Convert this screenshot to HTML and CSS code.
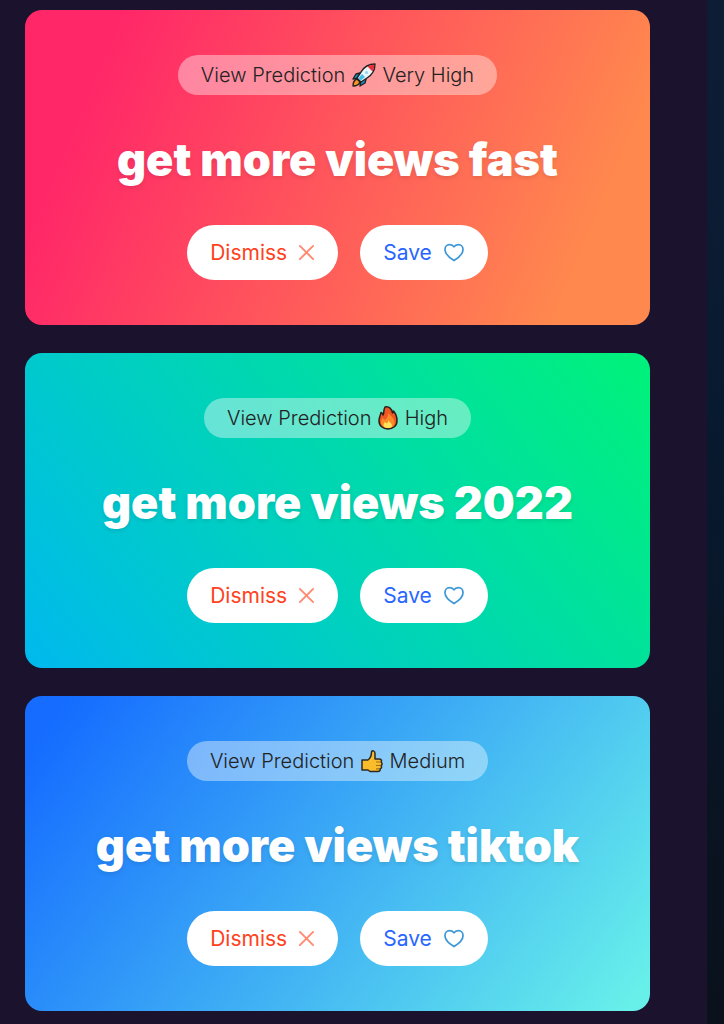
FILE: index.html
```html
<!DOCTYPE html>
<html lang="en">
<head>
<meta charset="UTF-8" />
<meta name="viewport" content="width=device-width, initial-scale=1" />
<title>Keyword ideas</title>
<link rel="stylesheet" href="styles.css">
</head>
<body>

<!-- shared icons -->
<svg class="sprite" aria-hidden="true">
  <symbol id="icon-close" viewBox="0 0 18 18">
    <path d="M2 2l14 14M16 2l-14 14" fill="none" stroke="#ff8a70" stroke-width="2" stroke-linecap="round"/>
  </symbol>
  <symbol id="icon-heart" viewBox="0 0 22 20">
    <path d="M11 18.500C7 16 1.500 11.500 1.500 7C1.500 3.800 3.600 1.800 6.200 1.800C8.500 1.800 10.200 2.600 11 4C11.800 2.600 13.500 1.800 15.800 1.800C18.400 1.800 20.500 3.800 20.500 7C20.500 11.500 15 16 11 18.500Z" fill="none" stroke="#3c97d8" stroke-width="1.800" stroke-linejoin="round"/>
  </symbol>
</svg>

<main class="ideas">
  <article class="card card-very-high">
    <p class="prediction">View Prediction
      <svg class="emoji" viewBox="0 0 24 24" role="img" aria-label="rocket">
        <path d="M8 10L4 11L1 16L7 15L9 17L8 23L13 20L14 16Z" fill="#1593c7" stroke="#222" stroke-width="1.400" stroke-linejoin="round"/>
        <path d="M5 16C2 17 1 20 1 23C4 23 7 22 8 19Z" fill="#f7941d" stroke="#222" stroke-width="1.400" stroke-linejoin="round"/>
        <path d="M23 1C17 1 12 4 9 9L5 15L9 19L15 15C20 12 23 7 23 1Z" fill="#e9f5fa" stroke="#222" stroke-width="1.400" stroke-linejoin="round"/>
        <path d="M22.300 1.700C19.500 1.700 17.500 2.300 15.500 3.500L20.500 8.500C21.700 6.500 22.300 4.500 22.300 1.700Z" fill="#e6303a"/>
        <path d="M6.500 15L9 17.500L13 14L10 11Z" fill="#45bce6"/>
        <circle cx="14.500" cy="9.500" r="1.500" fill="#8fd3ec"/>
      </svg>
      Very High</p>
    <h2>get more views fast</h2>
    <div class="actions">
      <button type="button" class="dismiss">Dismiss <svg><use href="#icon-close"/></svg></button>
      <button type="button" class="save">Save <svg><use href="#icon-heart"/></svg></button>
    </div>
  </article>

  <article class="card card-high">
    <p class="prediction">View Prediction
      <svg class="emoji emoji-fire" viewBox="0 0 20 24" role="img" aria-label="fire">
        <path d="M7 1C11 0 14 3 14.500 7C15.200 6.500 15.500 6 15.500 5C18 8 19 11 19 14.500C19 20 15 23 10 23C5 23 1 20 1 14.500C1 11 2.500 9.500 3 6.500C4.500 7 5 8 5 9C6.500 7 5 4.500 7 1Z" fill="#ef5724" stroke="#2b201b" stroke-width="1.500" stroke-linejoin="round"/>
        <path d="M10 7C13 10 16.500 12 16.500 17C16.500 20.500 13.500 22 10 22C6.500 22 3 20 3 16.500C3 14.500 4 13 4.500 12L7 14C9 12 10.500 10 10 7Z" fill="#fb8b27"/>
        <path d="M10 14C11 16 14 17 14 19.500C14 21.500 12 22 10 22C7.500 22 5.500 21 5.500 19C5.500 17.500 6.500 17 7 16L9 17.500C10 16.500 10.200 15.500 10 14Z" fill="#ffe45b"/>
      </svg>
      High</p>
    <h2>get more views 2022</h2>
    <div class="actions">
      <button type="button" class="dismiss">Dismiss <svg><use href="#icon-close"/></svg></button>
      <button type="button" class="save">Save <svg><use href="#icon-heart"/></svg></button>
    </div>
  </article>

  <article class="card card-medium">
    <p class="prediction">View Prediction
      <svg class="emoji emoji-thumb" viewBox="0 0 22 24" role="img" aria-label="thumbs up">
        <path d="M1 11H7C10 9 10.500 7 10.500 3C11 1 14 1.500 14 4.500V10H18.500C20.500 10 21 12 20 13C21.500 14 21.300 16 20 16.500C21 18 20.500 19.500 19 19.800C19.500 21.500 18.500 22.500 17 22.500H9L7 21H1Z" fill="#f9bd2c" stroke="#2d2a26" stroke-width="1.500" stroke-linejoin="round"/>
        <path d="M15 13H19.500M15 16.500H19.500M15 19.800H18.500" stroke="#a86c18" stroke-width="1.200" fill="none"/>
      </svg>
      Medium</p>
    <h2>get more views tiktok</h2>
    <div class="actions">
      <button type="button" class="dismiss">Dismiss <svg><use href="#icon-close"/></svg></button>
      <button type="button" class="save">Save <svg><use href="#icon-heart"/></svg></button>
    </div>
  </article>
</main>

</body>
</html>
```

FILE: styles.css
```css
* { box-sizing: border-box; }
body { margin: 0; padding-right: 17px; background: linear-gradient(#0e1d36, #081a30 40%, #0a111b); font-family: Inter, sans-serif; }
.sprite { display: none; }
.ideas { display: flex; flex-direction: column; gap: 28px; padding: 10px 57px 13px 25px; background: #1b122e; }

.card { display: flex; flex-direction: column; align-items: center; padding: 45px 20px; border-radius: 17px; text-align: center; }
.card-very-high { background: linear-gradient(113deg, #ff2768 13%, #ff884e 87%); }
.card-high { background: linear-gradient(52deg, #00b9ee, #00f07e 96%); }
.card-medium { background: linear-gradient(127deg, #156cff 5%, #67efea 97%); }

.prediction { margin: 0; padding: 0 23px; border-radius: 20px; background: rgba(255, 255, 255, 0.4); color: #222; font-size: 20px; font-weight: 300; line-height: 40px; }
.emoji { width: 24px; height: 24px; margin: 0 1px; vertical-align: -5px; }
.emoji-fire { width: 20px; }
.emoji-thumb { width: 22px; }

h2 { margin: 37px 0; color: #fff; font-size: 45px; font-weight: 900; line-height: 56px; text-shadow: 0 2px 4px rgba(0, 0, 0, 0.1); }

.actions { display: flex; gap: 22px; }
button { display: flex; align-items: center; gap: 11px; height: 55px; padding: 0 23px; border: none; border-radius: 28px; background: #fff; font-family: inherit; font-size: 21px; cursor: pointer; }
.dismiss { color: #ff4120; }
.dismiss svg { width: 17px; height: 17px; }
.save { color: #2866ff; }
.save svg { width: 22px; height: 19px; }
```
